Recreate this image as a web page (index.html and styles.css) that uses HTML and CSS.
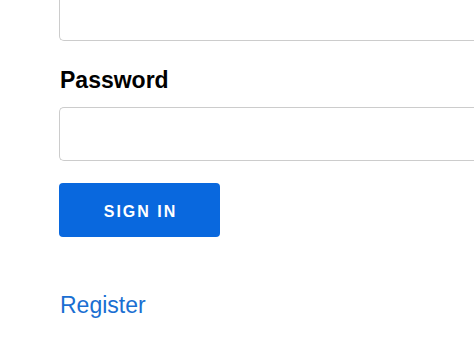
FILE: index.html
```html
<!DOCTYPE html>
<html lang="en">
<head>
<meta charset="utf-8">
<link rel="stylesheet" href="styles.css">
</head>
<body>
<form class="form">
  <input class="field" type="text" aria-label="Username">
  <label class="label" for="pw">Password</label>
  <input class="field" id="pw" type="password">
  <button class="btn" type="button">SIGN IN</button>
  <a class="link" href="#">Register</a>
</form>
</body>
</html>
```

FILE: styles.css
```css
html, body {
  margin: 0;
  padding: 0;
  background: #ffffff;
  overflow: hidden;
}
body {
  font-family: "Liberation Sans", Arial, sans-serif;
  width: 474px;
  height: 341px;
}
.form {
  display: flex;
  flex-direction: column;
  align-items: flex-start;
  padding-left: 59px;
  margin-top: -13px;
  overflow: hidden;
}
.field {
  box-sizing: border-box;
  height: 54px;
  border: 1.5px solid #cccccc;
  border-right: none;
  border-radius: 5px 0 0 5px;
  background: #fff;
  margin: 0;
  flex-shrink: 0;
  align-self: stretch;
}
.label {
  font-size: 23px;
  font-weight: bold;
  color: #000;
  margin-top: 26px;
  margin-bottom: 14px;
  margin-left: 1px;
  line-height: 26px;
}
.btn {
  margin-top: 22px;
  width: 161px;
  height: 54px;
  border: none;
  border-radius: 4px;
  background: #0968de;
  color: #fff;
  font-family: "Liberation Sans", Arial, sans-serif;
  font-size: 16px;
  font-weight: bold;
  letter-spacing: 2px;
  padding: 3px 0 0 2px;
}
.link {
  margin-top: 55px;
  margin-left: 1px;
  font-size: 23px;
  line-height: 26px;
  color: #1a6fd2;
  text-decoration: none;
}
```
